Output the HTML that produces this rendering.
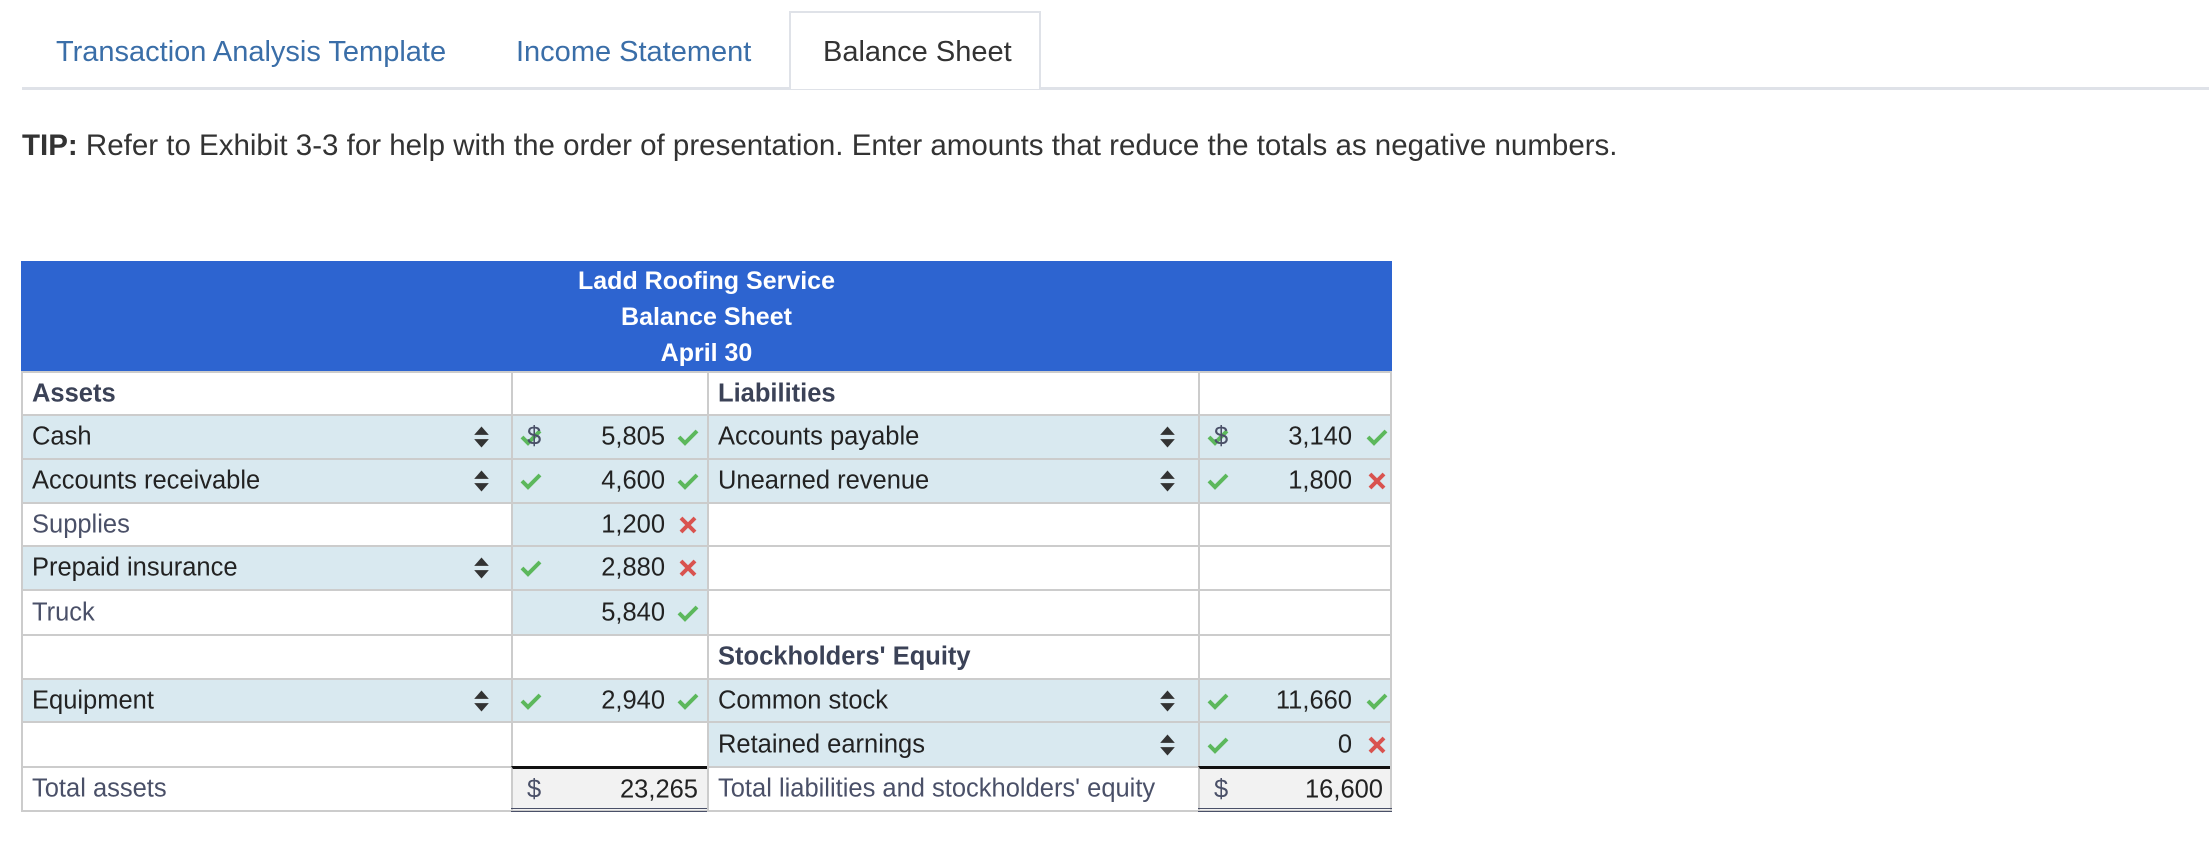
<!DOCTYPE html>
<html><head><meta charset="utf-8"><style>
*{margin:0;padding:0;box-sizing:border-box}
body{width:2209px;height:865px;background:#fff;position:relative;overflow:hidden;font-family:"Liberation Sans",Arial,sans-serif;color:#222}
.a{position:absolute;white-space:nowrap}
.tab{font-size:29px;color:#3a6ea8;top:36px}
.c{position:absolute;border-left:2px solid #ccc;border-top:2px solid #ccc;font-size:25.5px}
.b{background:#d9e9f0}
.g{background:#f2f2f2;border-top:3px solid #111}
.t{position:absolute;top:50%;transform:translateY(-50%);white-space:nowrap}
.l{left:9px}
.h{font-weight:bold;color:#3b4257}
.gr{color:#4a5068}
.arr{position:absolute;top:50%;transform:translateY(-50%);width:17px;height:23px;left:450px}
.ck{position:absolute;top:50%;transform:translateY(-50%);width:22px;height:18px}
.pk{left:7px}
.c0{left:21px;width:490px}.c1{left:511px;width:196px}.c2{left:707px;width:491px}.c3{left:1198px;width:194px}
.c1 .n{right:42px}.c3 .n{right:40px}.c1 .m{right:8px}.c3 .m{right:4px}
.c1 .n.z,.c3 .n.z{right:9px}
.dl{left:14px;color:#4a5068}
.r0{top:371px;height:43px}.r1{top:414px;height:44px}.r2{top:458px;height:44px}.r3{top:502px;height:43px}.r4{top:545px;height:44px}
.r5{top:589px;height:45px}.r6{top:634px;height:44px}.r7{top:678px;height:43px}.r8{top:721px;height:45px}.r9{top:766px;height:44px}
</style></head><body>
<div class="a tab" style="left:56px">Transaction Analysis Template</div>
<div class="a tab" style="left:516px">Income Statement</div>
<div style="position:absolute;left:789px;top:11px;width:252px;height:78px;border:2px solid #dfe2e8;border-bottom:none;background:#fff;z-index:2"></div>
<div class="a tab" style="left:823px;color:#333;z-index:3">Balance Sheet</div>
<div style="position:absolute;left:22px;top:87px;width:2187px;height:3px;background:#dfe2e8"></div>
<div class="a" style="left:22px;top:129px;font-size:29.5px;color:#333"><b>TIP:</b> Refer to Exhibit 3-3 for help with the order of presentation. Enter amounts that reduce the totals as negative numbers.</div>

<div style="position:absolute;left:21px;top:261px;width:1371px;height:110px;background:#2d64d0;color:#fff;font-weight:bold;font-size:25px;text-align:center;line-height:36px;padding-top:2px">Ladd Roofing Service<br>Balance Sheet<br>April 30</div>

<svg width="0" height="0" style="position:absolute"><defs>
<symbol id="ar" viewBox="0 0 16 22"><path d="M8 1 L15 9 L1 9Z M1 13 L15 13 L8 21Z" fill="#333"/></symbol>
<symbol id="ok" viewBox="0 0 22 18"><path d="M2 9 L8 15 L20 3" fill="none" stroke="#5cb85c" stroke-width="4"/></symbol>
<symbol id="no" viewBox="0 0 22 18"><path d="M4 2 L18 16 M18 2 L4 16" fill="none" stroke="#d9534f" stroke-width="4"/></symbol>
</defs></svg>

<div class="c c0 r0"><span class="t l h">Assets</span></div>
<div class="c c1 r0"></div>
<div class="c c2 r0"><span class="t l h">Liabilities</span></div>
<div class="c c3 r0"></div>

<div class="c c0 r1 b"><span class="t l">Cash</span><svg class="arr"><use href="#ar"/></svg></div>
<div class="c c1 r1 b"><svg class="ck pk"><use href="#ok"/></svg><span class="t dl">$</span><span class="t n">5,805</span><svg class="ck m"><use href="#ok"/></svg></div>
<div class="c c2 r1 b"><span class="t l">Accounts payable</span><svg class="arr"><use href="#ar"/></svg></div>
<div class="c c3 r1 b"><svg class="ck pk"><use href="#ok"/></svg><span class="t dl">$</span><span class="t n">3,140</span><svg class="ck m"><use href="#ok"/></svg></div>

<div class="c c0 r2 b"><span class="t l">Accounts receivable</span><svg class="arr"><use href="#ar"/></svg></div>
<div class="c c1 r2 b"><svg class="ck pk"><use href="#ok"/></svg><span class="t n">4,600</span><svg class="ck m"><use href="#ok"/></svg></div>
<div class="c c2 r2 b"><span class="t l">Unearned revenue</span><svg class="arr"><use href="#ar"/></svg></div>
<div class="c c3 r2 b"><svg class="ck pk"><use href="#ok"/></svg><span class="t n">1,800</span><svg class="ck m"><use href="#no"/></svg></div>

<div class="c c0 r3"><span class="t l gr">Supplies</span></div>
<div class="c c1 r3 b"><span class="t n">1,200</span><svg class="ck m"><use href="#no"/></svg></div>
<div class="c c2 r3"></div>
<div class="c c3 r3"></div>

<div class="c c0 r4 b"><span class="t l">Prepaid insurance</span><svg class="arr"><use href="#ar"/></svg></div>
<div class="c c1 r4 b"><svg class="ck pk"><use href="#ok"/></svg><span class="t n">2,880</span><svg class="ck m"><use href="#no"/></svg></div>
<div class="c c2 r4"></div>
<div class="c c3 r4"></div>

<div class="c c0 r5"><span class="t l gr">Truck</span></div>
<div class="c c1 r5 b"><span class="t n">5,840</span><svg class="ck m"><use href="#ok"/></svg></div>
<div class="c c2 r5"></div>
<div class="c c3 r5"></div>

<div class="c c0 r6"></div>
<div class="c c1 r6"></div>
<div class="c c2 r6"><span class="t l h">Stockholders' Equity</span></div>
<div class="c c3 r6"></div>

<div class="c c0 r7 b"><span class="t l">Equipment</span><svg class="arr"><use href="#ar"/></svg></div>
<div class="c c1 r7 b"><svg class="ck pk"><use href="#ok"/></svg><span class="t n">2,940</span><svg class="ck m"><use href="#ok"/></svg></div>
<div class="c c2 r7 b"><span class="t l">Common stock</span><svg class="arr"><use href="#ar"/></svg></div>
<div class="c c3 r7 b"><svg class="ck pk"><use href="#ok"/></svg><span class="t n">11,660</span><svg class="ck m"><use href="#ok"/></svg></div>

<div class="c c0 r8"></div>
<div class="c c1 r8"></div>
<div class="c c2 r8 b"><span class="t l">Retained earnings</span><svg class="arr"><use href="#ar"/></svg></div>
<div class="c c3 r8 b"><svg class="ck pk"><use href="#ok"/></svg><span class="t n">0</span><svg class="ck m"><use href="#no"/></svg></div>

<div class="c c0 r9"><span class="t l gr">Total assets</span></div>
<div class="c c1 r9 g"><span class="t dl">$</span><span class="t n z">23,265</span></div>
<div class="c c2 r9"><span class="t l gr">Total liabilities and stockholders' equity</span></div>
<div class="c c3 r9 g"><span class="t dl">$</span><span class="t n z">16,600</span></div>

<div style="position:absolute;left:21px;top:810px;width:1371px;height:2px;background:#ccc"></div>
<div style="position:absolute;left:1390px;top:371px;width:2px;height:441px;background:#ccc"></div>
<div style="position:absolute;left:511px;top:808px;width:196px;height:4px;border-top:1px solid #4a5068;border-bottom:1px solid #4a5068"></div>
<div style="position:absolute;left:1198px;top:808px;width:194px;height:4px;border-top:1px solid #4a5068;border-bottom:1px solid #4a5068"></div>
</body></html>
